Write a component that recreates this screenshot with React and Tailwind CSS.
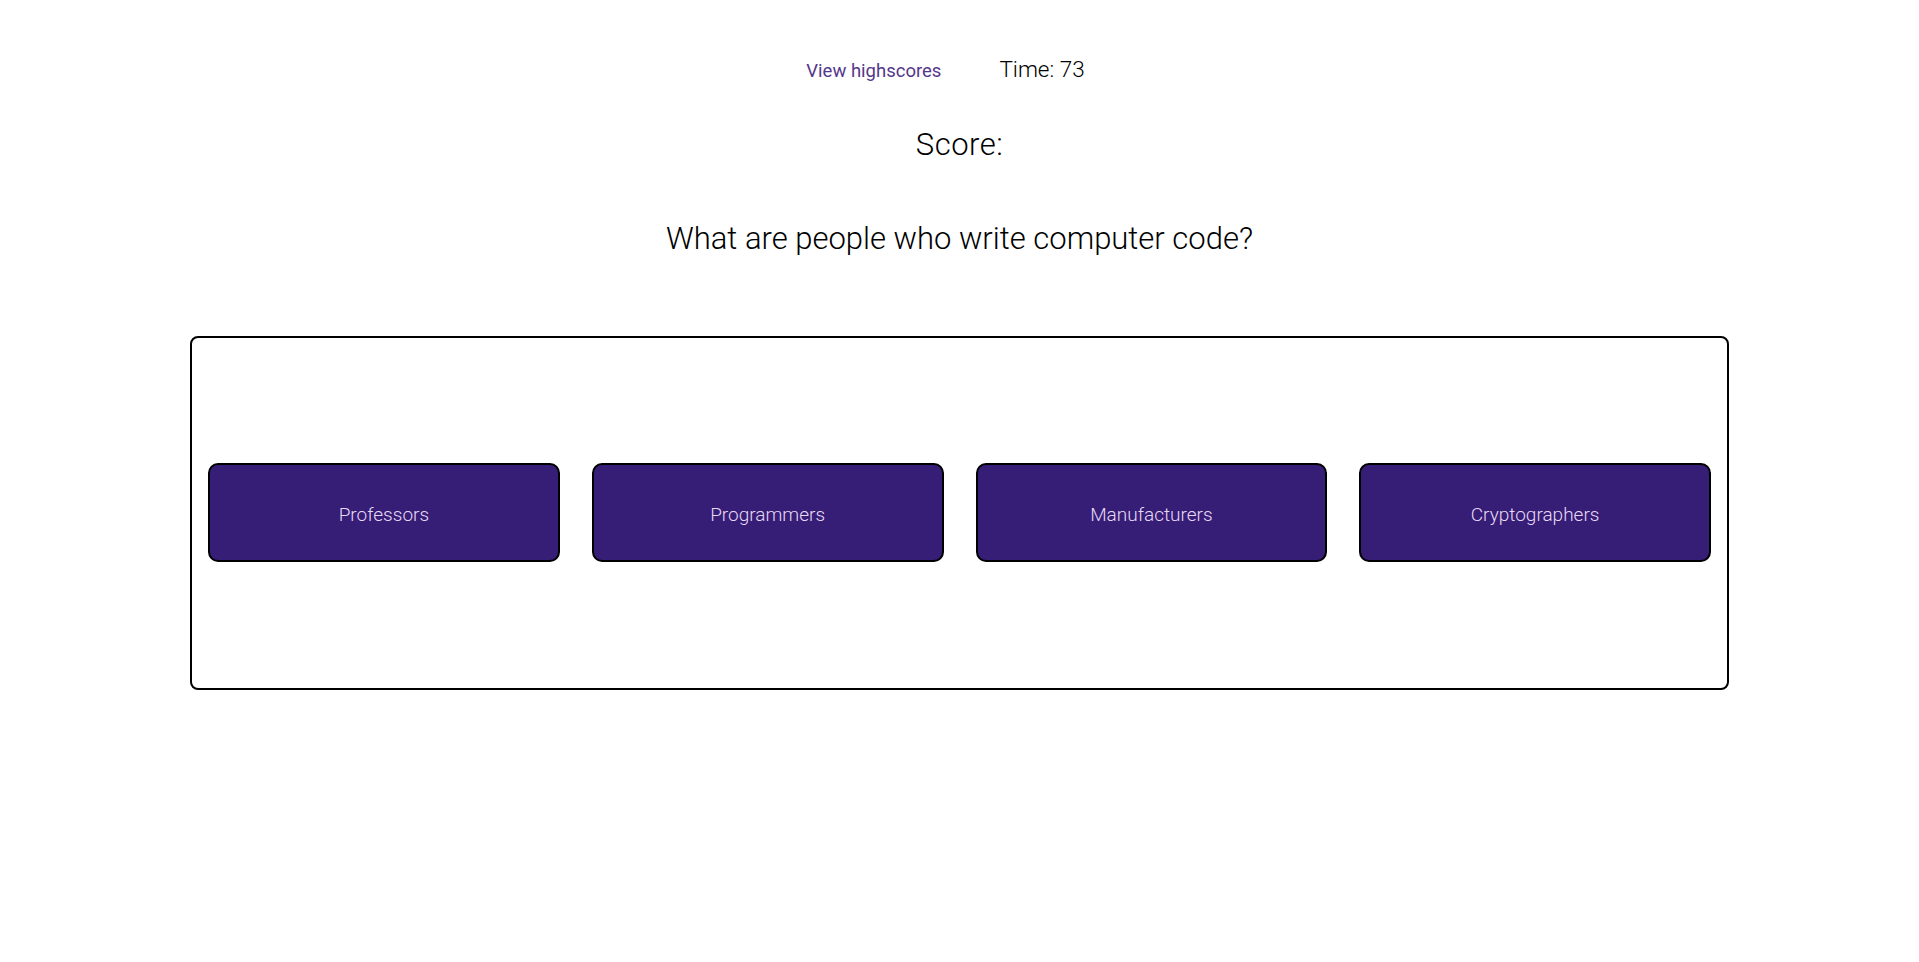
const choices = ['Professors', 'Programmers', 'Manufacturers', 'Cryptographers'];

export default function App() {
  return (
    <div className="min-h-screen bg-white text-black" style={{ fontFamily: 'Roboto, "Liberation Sans", sans-serif' }}>
      <header className="flex items-baseline justify-center gap-[58px] pt-[53px] pr-[28px]">
        <a href="#" className="text-[18.5px] text-[#55378a]">View highscores</a>
        <span className="text-[22.5px] font-light">Time: 73</span>
      </header>

      <h2 className="mt-[35px] text-center text-[31px] font-light tracking-[0.5px]">Score:</h2>

      <h1 className="mt-[48px] text-center text-[31px] font-light">What are people who write computer code?</h1>

      <main className="mx-auto mt-[73px] flex h-[354px] w-[1539px] items-center gap-[32px] rounded-lg border-2 border-black px-[16px]">
        {choices.map((c) => (
          <button
            key={c}
            className="h-[99px] flex-1 rounded-[10px] border-2 border-black bg-[#361d75] pt-[4px] text-[19px] font-light text-[#e6d9f5]"
          >
            {c}
          </button>
        ))}
      </main>
    </div>
  );
}
